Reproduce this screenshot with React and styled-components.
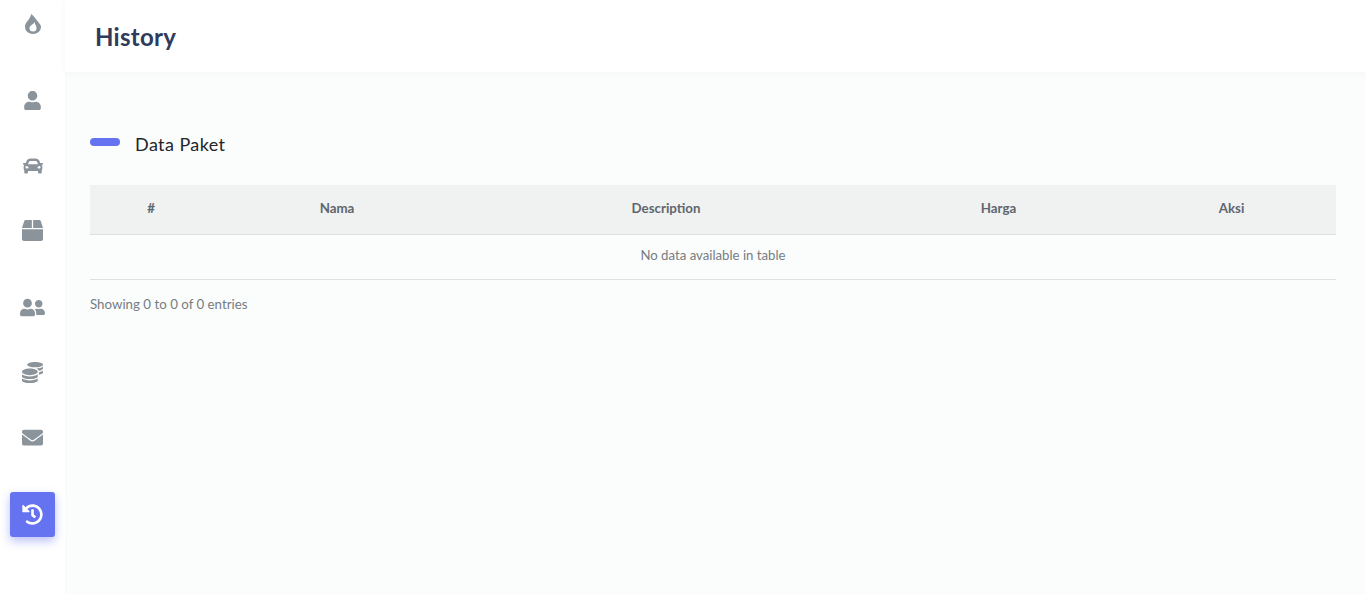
import React from "react";
import styled, { createGlobalStyle } from "styled-components";
import { FaUser, FaCar, FaBox, FaUserFriends, FaCoins, FaEnvelope, FaHistory } from "react-icons/fa";

const Global = createGlobalStyle`
  html, body { margin: 0; padding: 0; height: 100%; background: #fbfcfc; overflow: hidden; }
  body { font-family: "Lato", "Open Sans", "Liberation Sans", sans-serif; }
`;
const Page = styled.div`display: flex; width: 1366px; height: 594px;`;
const Sidebar = styled.nav`
  width: 65px; flex: none; background: #fff; display: flex; flex-direction: column; align-items: center;
  box-shadow: 1px 0 2px rgba(0,0,0,.015);
`;
const NavItem = styled.a`
  width: 45px; height: 45px; margin-top: ${p => p.$top}px; flex: none;
  display: flex; align-items: center; justify-content: center; border-radius: 3px;
  color: ${p => p.$active ? "#fff" : "#8b939b"};
  background: ${p => p.$active ? "#6673f0" : "transparent"};
  box-shadow: ${p => p.$active ? "0 4px 10px rgba(102,115,240,.45)" : "none"};
  svg { width: ${p => p.$size}px; height: ${p => p.$size}px; display: block; }
`;
const Main = styled.div`flex: 1; min-width: 0; display: flex; flex-direction: column;`;
const Header = styled.header`
  height: 72px; flex: none; background: #fff; display: flex; align-items: center; padding-left: 30px;
  box-shadow: 0 1px 8px rgba(0,0,0,.035);
`;
const Title = styled.h1`margin: 0; font-size: 24px; font-weight: 700; color: #2f3a5c; letter-spacing: .3px; line-height: 30px; padding-top: 2px;`;
const Content = styled.main`padding: 60px 30px 0 25px;`;
const SectionHead = styled.div`display: flex; align-items: center; gap: 15px; height: 26px;`;
const Pill = styled.span`width: 30px; height: 8px; border-radius: 4px; background: #6673f0; margin-bottom: 6px;`;
const SectionTitle = styled.h2`margin: 0; font-size: 18px; font-weight: 400; color: #22262b; letter-spacing: .42px; line-height: 24px; padding-bottom: 2px;`;
const Table = styled.table`
  width: 1246px; margin-top: 27px; table-layout: fixed; border-collapse: collapse; font-size: 13.3px;
`;
const Th = styled.th`
  height: 45px; padding: 0 0 4px; background: #f0f2f2; font-weight: 700; color: #60666d; text-align: center;
  border-bottom: 1px solid #dfe1e1;
`;
const Td = styled.td`
  height: 40px; padding: 0 0 4px; font-size: 13.2px; text-align: center; color: #757c83; border-bottom: 1px solid #dfe1e1;
`;
const Info = styled.div`margin-top: 15px; font-size: 13.3px; line-height: 18px; color: #757c83;`;

const Flame = () => (
  <svg viewBox="0 0 16 20" fill="currentColor">
    <path fillRule="evenodd" d="M6 0C8 1 9.5 3.5 12 6.5C14.5 9.5 16 11 16 13A8 7 0 0 1 0 13C0 9 2.5 7.5 4 5C5 3.5 6 2 6 0ZM9.5 8C9 10.5 4.5 11 4.5 14A3.5 3.5 0 0 0 11.5 14C11.5 12 10 10.5 9.5 8Z" />
  </svg>
);

const items = [
  { I: Flame, top: 1, size: 20 },
  { I: FaUser, top: 32, size: 19 },
  { I: FaCar, top: 20, size: 20 },
  { I: FaBox, top: 20, size: 21 },
  { I: FaUserFriends, top: 32, size: 25 },
  { I: FaCoins, top: 20, size: 21 },
  { I: FaEnvelope, top: 20, size: 21 },
  { I: FaHistory, top: 32, size: 21, active: true },
];
const cols = [
  ["#", 122], ["Nama", 250], ["Description", 408], ["Harga", 257], ["Aksi", 209],
];

export default function App() {
  return (
    <Page>
      <Global />
      <Sidebar>
        {items.map(({ I, top, size, active }, i) => (
          <NavItem key={i} $top={top} $size={size} $active={active}><I /></NavItem>
        ))}
      </Sidebar>
      <Main>
        <Header><Title>History</Title></Header>
        <Content>
          <SectionHead><Pill /><SectionTitle>Data Paket</SectionTitle></SectionHead>
          <Table>
            <colgroup>{cols.map(([n, w]) => <col key={n} width={w} />)}</colgroup>
            <thead><tr>{cols.map(([n]) => <Th key={n}>{n}</Th>)}</tr></thead>
            <tbody><tr><Td colSpan={5}>No data available in table</Td></tr></tbody>
          </Table>
          <Info>Showing 0 to 0 of 0 entries</Info>
        </Content>
      </Main>
    </Page>
  );
}
